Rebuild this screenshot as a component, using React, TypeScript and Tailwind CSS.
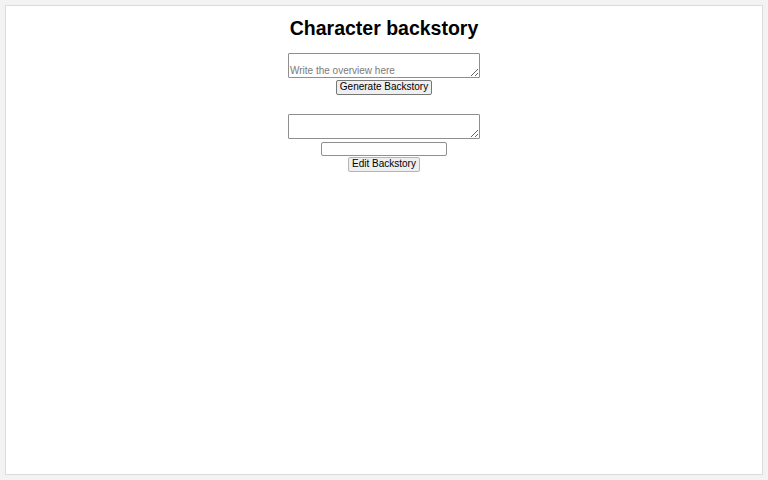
import React from "react";

export default function App() {
  return (
    <div className="w-[768px] h-[480px] bg-[#f3f3f3] p-[5px] box-border" style={{ fontFamily: '"Liberation Sans", Arial, sans-serif' }}>
      <div className="w-full h-full bg-white border border-[#dcdcdc] flex flex-col items-center box-border">
        <h1 className="text-[19.5px] font-bold text-black leading-none mt-[13px] mb-[14px]">Character backstory</h1>
        <textarea
          placeholder="Write the overview here"
          className="w-[192px] h-[25px] border border-[#8f8f8f] rounded-[1px] bg-white text-[10px] leading-[12px] pt-[11px] pb-0 px-[1px] placeholder:text-[#7a7a7a] resize-y block overflow-hidden"
          style={{ fontFamily: '"Liberation Sans", Arial, sans-serif' }}
        />
        <button className="mt-[2px] h-[15px] px-[3px] text-[10px] leading-none text-black bg-[#efefef] border border-[#767676] rounded-[2px] flex items-center justify-center">
          Generate Backstory
        </button>
        <textarea
          className="mt-[19px] w-[192px] h-[25px] border border-[#8f8f8f] rounded-[1px] bg-white text-[10px] resize-y block"
        />
        <input
          type="text"
          className="mt-[3px] w-[126px] h-[14px] border border-[#8f8f8f] rounded-[2px] bg-white text-[10px] block"
        />
        <button className="mt-[1px] h-[15px] px-[3px] text-[10px] leading-none text-black bg-[#efefef] border border-[#b5b5b5] rounded-[2px] flex items-center justify-center">
          Edit Backstory
        </button>
      </div>
    </div>
  );
}
